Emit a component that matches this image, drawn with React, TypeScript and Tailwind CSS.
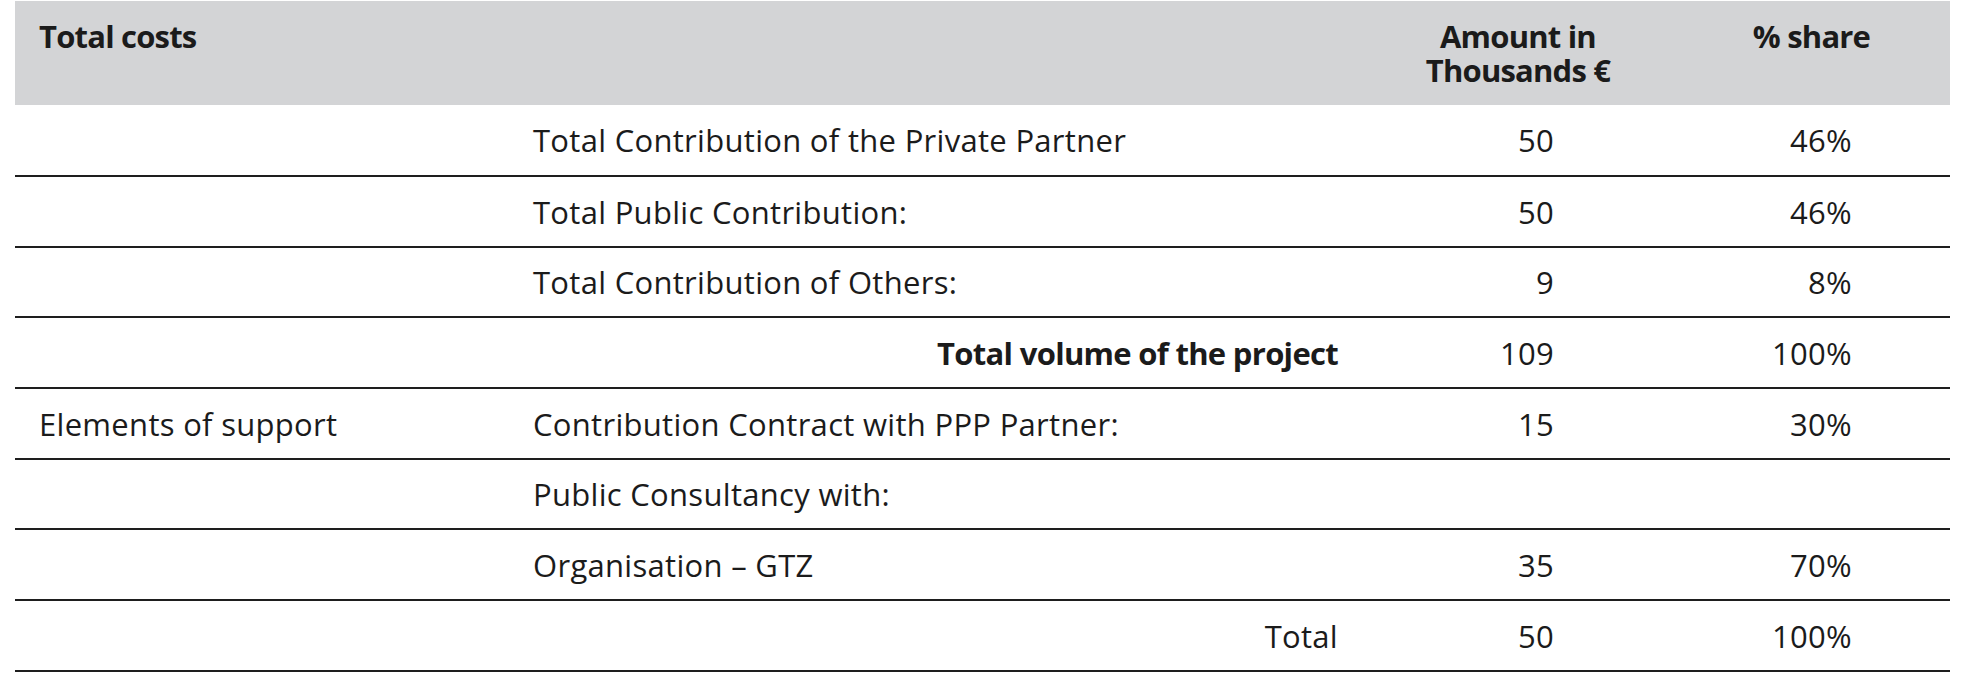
import React from "react";

type Row = {
  c1?: string;
  c2?: string;
  c2Right?: boolean;
  c2Bold?: boolean;
  amount?: string;
  share?: string;
};

const rows: Row[] = [
  { c2: "Total Contribution of the Private Partner", amount: "50", share: "46%" },
  { c2: "Total Public Contribution:", amount: "50", share: "46%" },
  { c2: "Total Contribution of Others:", amount: "9", share: "8%" },
  { c2: "Total volume of the project", c2Right: true, c2Bold: true, amount: "109", share: "100%" },
  { c1: "Elements of support", c2: "Contribution Contract with PPP Partner:", amount: "15", share: "30%" },
  { c2: "Public Consultancy with:" },
  { c2: "Organisation – GTZ", amount: "35", share: "70%" },
  { c2: "Total", c2Right: true, amount: "50", share: "100%" },
];

const heights = ["h-[72px]", "h-[71px]", "h-[70px]", "h-[71px]", "h-[71px]", "h-[70px]", "h-[71px]", "h-[71px]"];

export default function App() {
  return (
    <div
      className="w-[1968px] h-[675px] bg-white text-[#1b1b1b] pl-[15px] pt-[1px]"
      style={{ fontFamily: '"Open Sans", "Noto Sans", sans-serif' }}
    >
      <div className="w-[1935px]">
        <div className="grid grid-cols-[493px_855px_310px_277px] bg-[#d3d4d6] h-[104px] font-bold text-[31px] leading-[34px] tracking-[-0.8px]">
          <div className="pl-[24px] pt-[18px]">Total costs</div>
          <div />
          <div className="pt-[18px] text-center">
            Amount in
            <br />
            Thousands €
          </div>
          <div className="pt-[18px] text-center">% share</div>
        </div>
        {rows.map((r, i) => (
          <div
            key={i}
            className={`grid grid-cols-[493px_855px_310px_277px] items-center text-[31px] leading-[40px] tracking-[0.3px] ${heights[i]} border-b-[2px] border-[#1e1e1e]`}
          >
            <div className="pl-[24px]">{r.c1}</div>
            <div
              className={`${r.c2Right ? "text-right pr-[25px]" : "pl-[25px]"} ${
                r.c2Bold ? "font-bold tracking-[-0.7px]" : ""
              }`}
            >
              {r.c2}
            </div>
            <div className="text-right pr-[119px]">{r.amount}</div>
            <div className="text-right pr-[98px]">{r.share}</div>
          </div>
        ))}
      </div>
    </div>
  );
}
